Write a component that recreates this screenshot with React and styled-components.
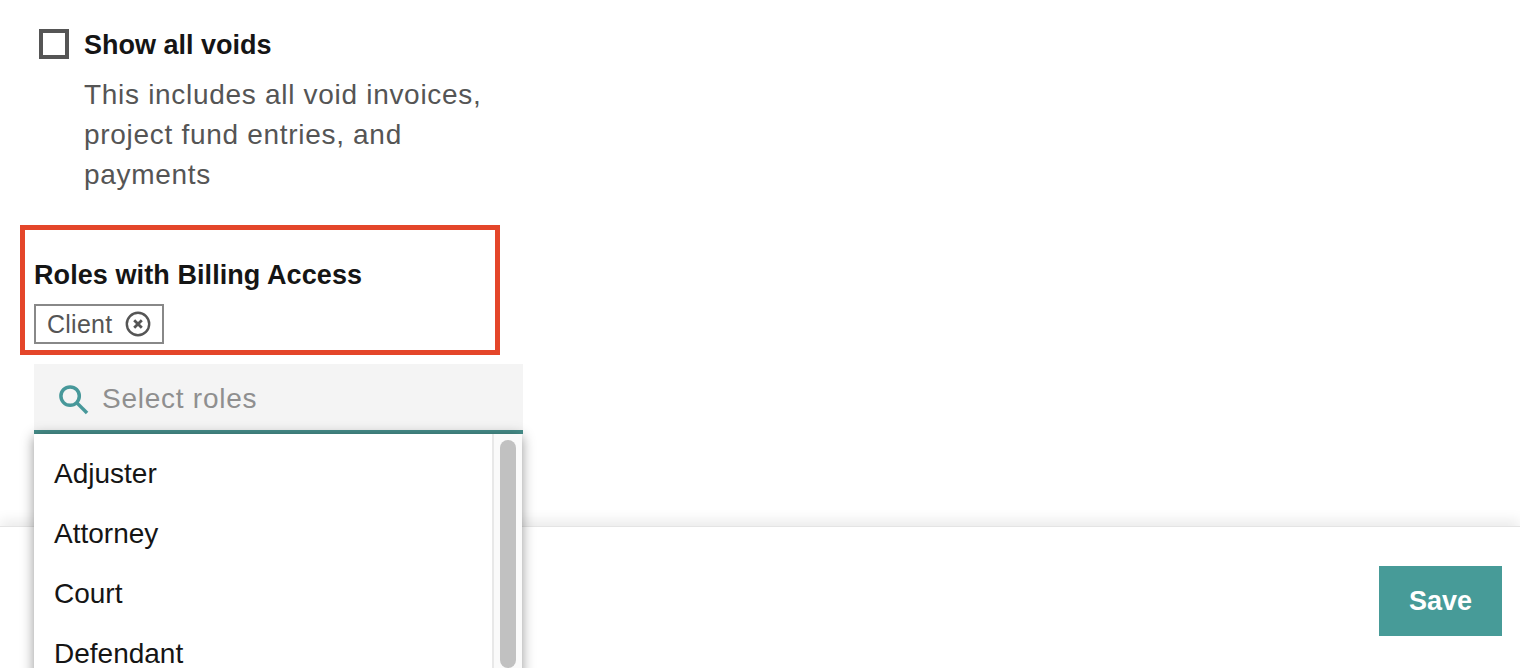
import React from 'react';
import styled, { createGlobalStyle } from 'styled-components';

const GlobalStyle = createGlobalStyle`
  html, body {
    margin: 0;
    height: 100%;
    overflow: hidden;
    background: #fff;
  }
  body {
    font-family: "Liberation Sans", Arial, sans-serif;
    color: #151515;
  }
`;

const Page = styled.div`
  display: flex;
  flex-direction: column;
  height: 668px;
  overflow: hidden;
`;

const Content = styled.main`
  flex-grow: 1;
  padding: 29px 0 0 20px;
`;

const VoidsRow = styled.div`
  display: flex;
  gap: 15px;
  padding-left: 19px;
`;

const Checkbox = styled.span`
  box-sizing: border-box;
  flex: none;
  width: 30px;
  height: 30px;
  border: 4px solid #555;
  background: #fff;
`;

const VoidsText = styled.div`
  width: 420px;
`;

const VoidsLabel = styled.div`
  padding-top: 1px;
  font-size: 27px;
  font-weight: 700;
  line-height: 30px;
  color: #151515;
`;

const VoidsHint = styled.div`
  margin-top: 15px;
  font-size: 28px;
  line-height: 40px;
  letter-spacing: 0.7px;
  color: #555;
`;

const RolesBox = styled.section`
  box-sizing: border-box;
  width: 480px;
  height: 130px;
  margin-top: 30px;
  padding: 30px 9px 0;
  border: 5px solid #e4462a;
`;

const RolesTitle = styled.div`
  font-size: 27px;
  font-weight: 700;
  line-height: 30px;
  letter-spacing: 0.08px;
  color: #151515;
`;

const RoleTag = styled.span`
  box-sizing: border-box;
  display: inline-flex;
  align-items: center;
  gap: 13px;
  height: 40px;
  margin-top: 14px;
  padding: 0 11px 0 11px;
  border: 2px solid #888;
  font-size: 25px;
  letter-spacing: 0.25px;
  color: #555;
`;

const RolePicker = styled.div`
  position: relative;
  width: 489px;
  margin: 9px 0 0 14px;
`;

const SearchField = styled.div`
  box-sizing: border-box;
  display: flex;
  align-items: center;
  gap: 13px;
  height: 70px;
  padding: 4px 0 0 24px;
  background: #f4f4f4;
  border-bottom: 4px solid #47908c;
`;

const Placeholder = styled.span`
  font-size: 28px;
  letter-spacing: 0.75px;
  color: #8f8f8f;
`;

const Dropdown = styled.div`
  position: absolute;
  z-index: 2;
  top: 70px;
  left: 0;
  width: 488px;
  height: 300px;
  display: flex;
  background: #fff;
  box-shadow: 0 2px 12px rgba(0, 0, 0, 0.42);
`;

const OptionList = styled.ul`
  flex-grow: 1;
  margin: 0;
  padding: 10px 0 0;
  list-style: none;
`;

const Option = styled.li`
  height: 60px;
  padding-left: 20px;
  font-size: 28px;
  line-height: 60px;
  color: #151515;
`;

const ScrollTrack = styled.div`
  box-sizing: border-box;
  flex: none;
  width: 30px;
  padding: 6px 6px 0 6px;
  background: #fafafa;
  border-left: 2px solid #e8e8e8;
`;

const ScrollThumb = styled.div`
  height: 228px;
  border-radius: 8px;
  background: #c1c1c1;
`;

const Footer = styled.footer`
  box-sizing: border-box;
  flex: none;
  display: flex;
  justify-content: flex-end;
  height: 142px;
  padding: 39px 18px 0 0;
  background: #fff;
  border-top: 1px solid #e4e4e4;
  box-shadow: 0 -6px 12px rgba(0, 0, 0, 0.08);
`;

const SaveButton = styled.button`
  width: 123px;
  height: 70px;
  padding: 0;
  border: none;
  background: #479b98;
  font-family: inherit;
  font-size: 27px;
  font-weight: 700;
  color: #fff;
`;

const ClearIcon = () => (
  <svg width="26" height="26" viewBox="0 0 26 26" fill="none" stroke="#555">
    <circle cx="13" cy="13" r="11.2" strokeWidth="2.4" />
    <path d="M9.2 9.2l7.6 7.6M16.8 9.2l-7.6 7.6" strokeWidth="2.8" />
  </svg>
);

const SearchIcon = () => (
  <svg width="31" height="31" viewBox="0 0 32 32" fill="none" stroke="#47989a" strokeWidth="3.6">
    <circle cx="12.5" cy="12.5" r="9.5" />
    <path d="M19.5 19.5L30 30" />
  </svg>
);

const roles = ['Adjuster', 'Attorney', 'Court', 'Defendant'];

const App = () => (
  <Page>
    <GlobalStyle />
    <Content>
      <VoidsRow>
        <Checkbox />
        <VoidsText>
          <VoidsLabel>Show all voids</VoidsLabel>
          <VoidsHint>
            This includes all void invoices,
            <br />
            project fund entries, and
            <br />
            payments
          </VoidsHint>
        </VoidsText>
      </VoidsRow>
      <RolesBox>
        <RolesTitle>Roles with Billing Access</RolesTitle>
        <RoleTag>
          Client
          <ClearIcon />
        </RoleTag>
      </RolesBox>
      <RolePicker>
        <SearchField>
          <SearchIcon />
          <Placeholder>Select roles</Placeholder>
        </SearchField>
        <Dropdown>
          <OptionList>
            {roles.map((role) => (
              <Option key={role}>{role}</Option>
            ))}
          </OptionList>
          <ScrollTrack>
            <ScrollThumb />
          </ScrollTrack>
        </Dropdown>
      </RolePicker>
    </Content>
    <Footer>
      <SaveButton>Save</SaveButton>
    </Footer>
  </Page>
);

export default App;
